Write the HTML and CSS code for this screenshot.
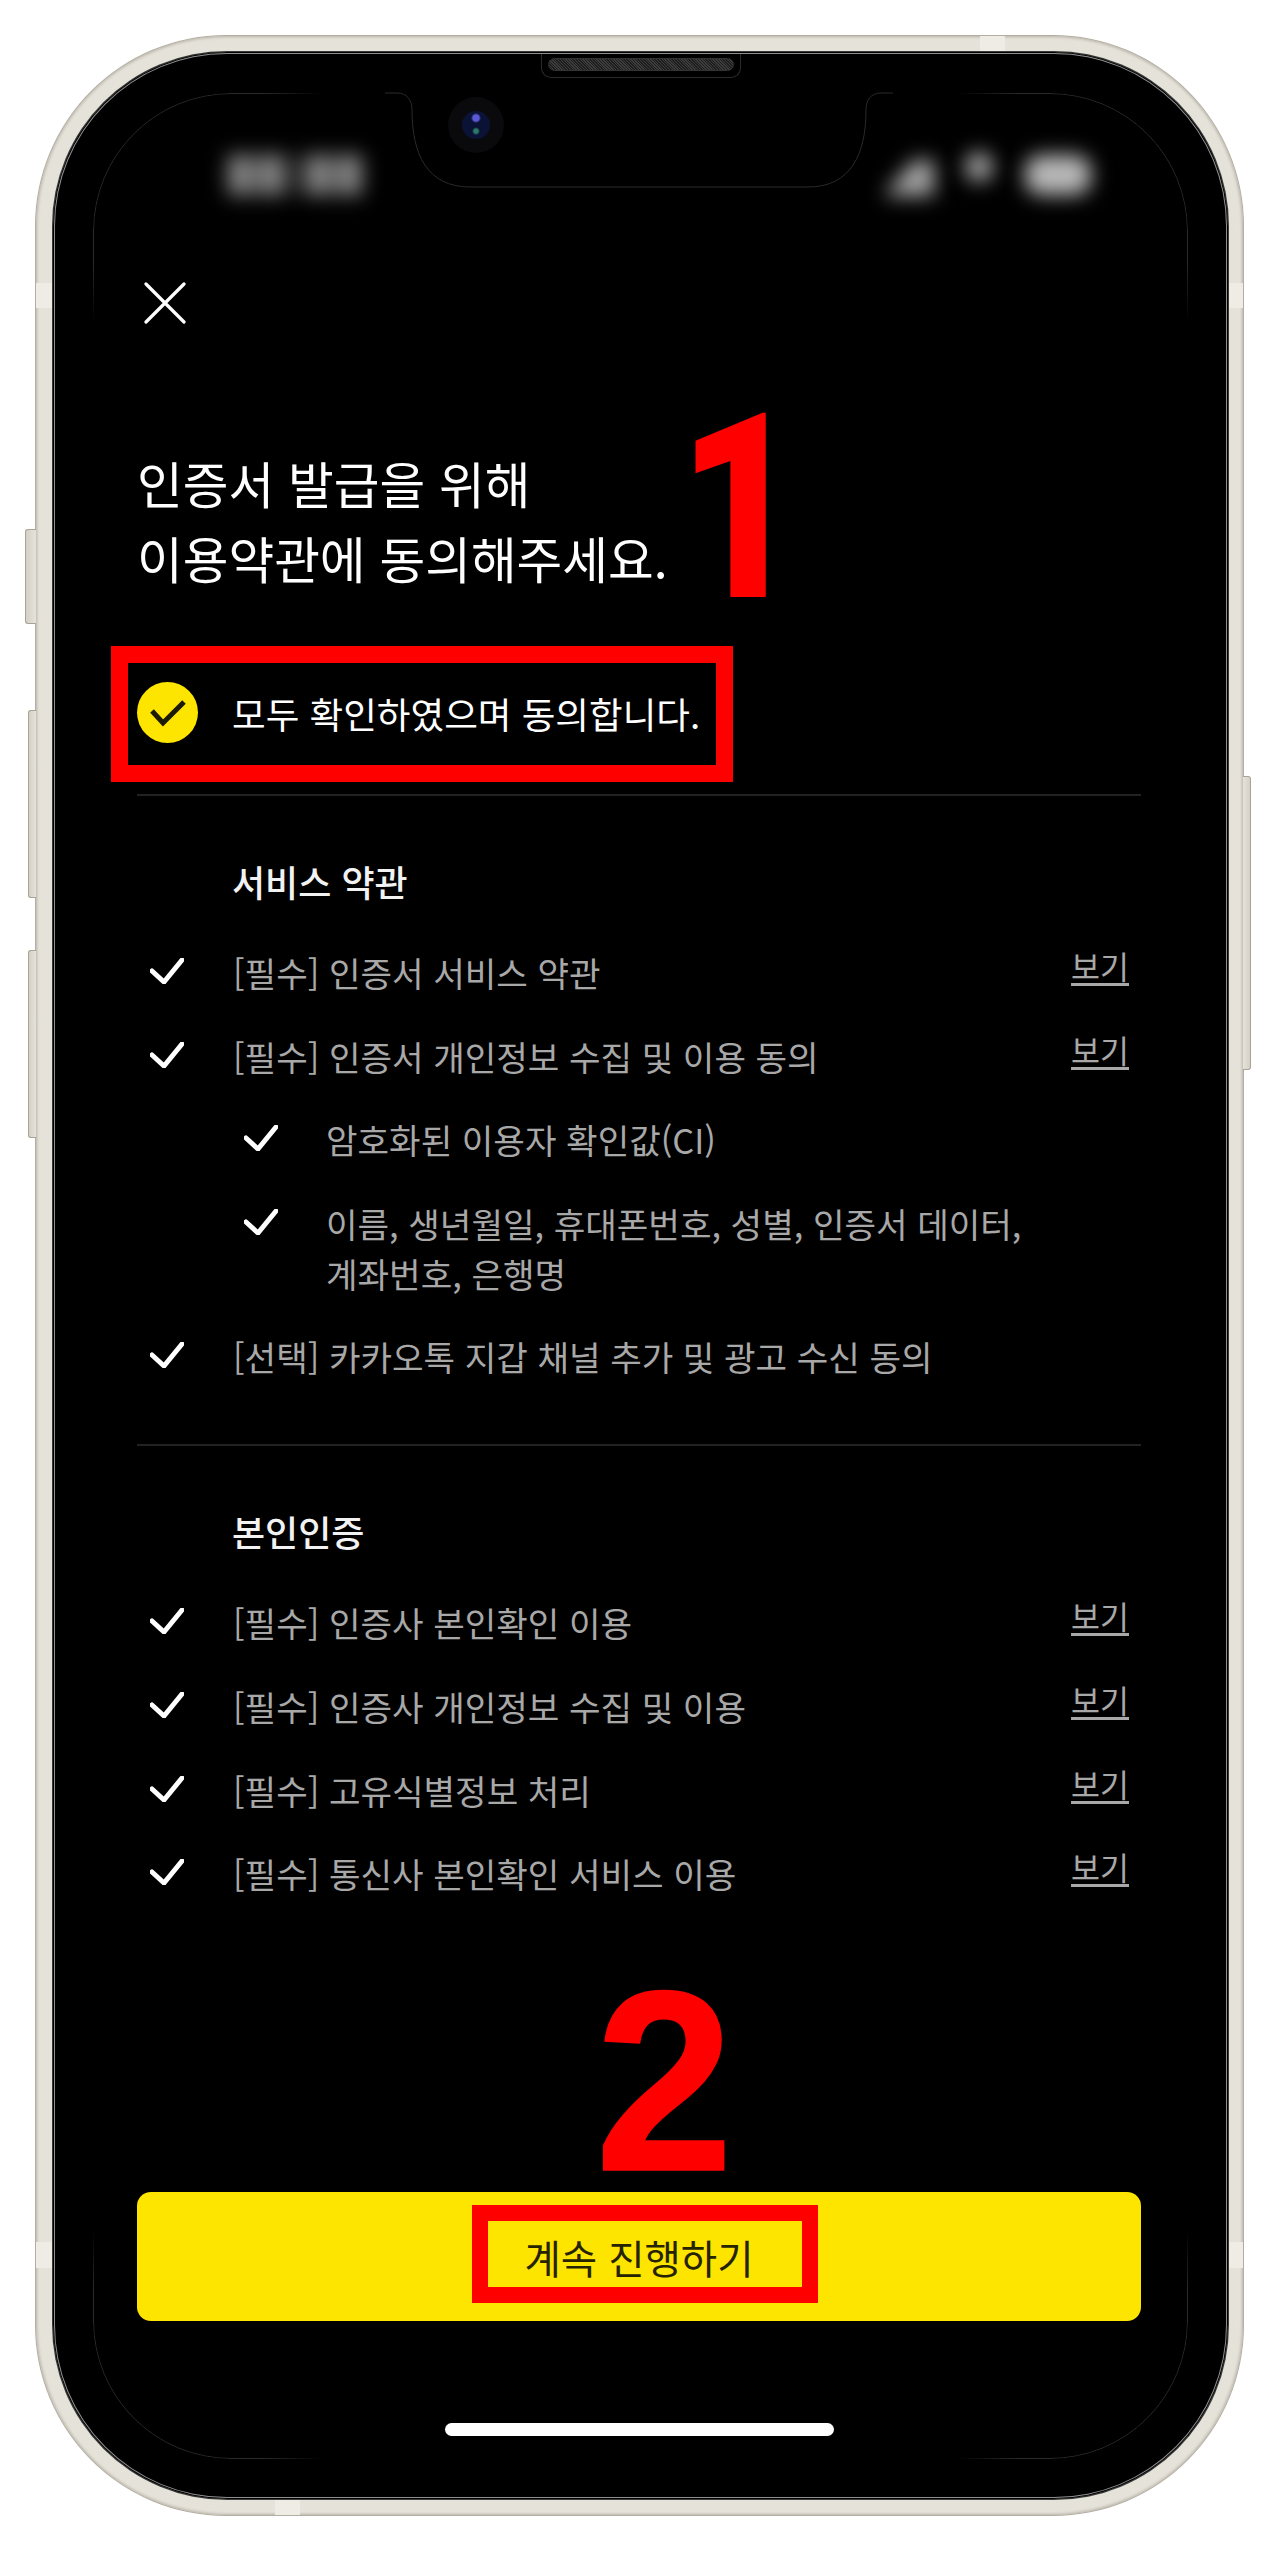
FILE: index.html
```html
<!DOCTYPE html>
<html lang="ko">
<head>
<meta charset="utf-8">
<title>인증서 발급</title>
<link rel="stylesheet" href="styles.css">
</head>
<body>
<div class="phone">
  <i class="side mute"></i><i class="side volup"></i><i class="side voldown"></i><i class="side power"></i>
  <i class="band band-lt"></i><i class="band band-rt"></i><i class="band band-lb"></i><i class="band band-rb"></i><i class="band band-top"></i><i class="band band-bottom"></i>
  <div class="screen">
    <div class="glass"></div>
    <svg class="notch" viewBox="0 0 508 100" width="508" height="100"><path d="M0 1H12C22 1 27 8 27 18 27 62 42 95 85 95H423C466 95 481 62 481 18 481 8 486 1 496 1H508" /></svg>
    <div class="speaker"><span></span></div>
    <div class="camera"><span></span></div>
    <div class="blob blob-time"><i></i><i></i><b></b><i></i><i></i></div>
    <div class="blob blob-signal"></div>
    <div class="blob blob-wifi"></div>
    <div class="blob blob-battery"></div>

    <main class="content">
      <button class="close" aria-label="닫기">
        <svg viewBox="0 0 42 42" width="42" height="42"><path d="M2 2 40 40M40 2 2 40" fill="none" stroke="#fff" stroke-width="3.2" stroke-linecap="round"/></svg>
      </button>
      <h1 class="title">인증서 발급을 위해<br>이용약관에 동의해주세요.</h1>
      <div class="agree">
        <span class="tick-round">
          <svg viewBox="0 0 61 61" width="61" height="61"><path d="M15 29 26 41 47 20" fill="none" stroke="#1c1a00" stroke-width="5"/></svg>
        </span>
        <span class="agree-text">모두 확인하였으며 동의합니다.</span>
      </div>

      <section class="group first">
        <h2 class="group-title">서비스 약관</h2>
        <ul class="rows">
          <li class="row"><svg class="chk" viewBox="0 0 34 26"><path d="M2 13 14 24 32 2" /></svg><span class="label">[필수] 인증서 서비스 약관</span><a class="see">보기</a></li>
          <li class="row"><svg class="chk" viewBox="0 0 34 26"><path d="M2 13 14 24 32 2" /></svg><span class="label">[필수] 인증서 개인정보 수집 및 이용 동의</span><a class="see">보기</a></li>
          <li class="row sub"><svg class="chk" viewBox="0 0 34 26"><path d="M2 13 14 24 32 2" /></svg><span class="label">암호화된 이용자 확인값(CI)</span></li>
          <li class="row sub"><svg class="chk" viewBox="0 0 34 26"><path d="M2 13 14 24 32 2" /></svg><span class="label">이름, 생년월일, 휴대폰번호, 성별, 인증서 데이터,<br>계좌번호, 은행명</span></li>
          <li class="row"><svg class="chk" viewBox="0 0 34 26"><path d="M2 13 14 24 32 2" /></svg><span class="label">[선택] 카카오톡 지갑 채널 추가 및 광고 수신 동의</span></li>
        </ul>
      </section>

      <section class="group second">
        <h2 class="group-title">본인인증</h2>
        <ul class="rows">
          <li class="row"><svg class="chk" viewBox="0 0 34 26"><path d="M2 13 14 24 32 2" /></svg><span class="label">[필수] 인증사 본인확인 이용</span><a class="see">보기</a></li>
          <li class="row"><svg class="chk" viewBox="0 0 34 26"><path d="M2 13 14 24 32 2" /></svg><span class="label">[필수] 인증사 개인정보 수집 및 이용</span><a class="see">보기</a></li>
          <li class="row"><svg class="chk" viewBox="0 0 34 26"><path d="M2 13 14 24 32 2" /></svg><span class="label">[필수] 고유식별정보 처리</span><a class="see">보기</a></li>
          <li class="row"><svg class="chk" viewBox="0 0 34 26"><path d="M2 13 14 24 32 2" /></svg><span class="label">[필수] 통신사 본인확인 서비스 이용</span><a class="see">보기</a></li>
        </ul>
      </section>

      <button class="cta">계속 진행하기</button>
      <div class="home"></div>
    </main>

    <div class="mark mark-box-1"></div>
    <div class="mark mark-box-2"></div>
    <div class="num num-1">1</div>
    <div class="num num-2">2</div>
  </div>
</div>
</body>
</html>
```
FILE: styles.css
```css
* { box-sizing: border-box; }
html, body { margin: 0; padding: 0; background: #fff; }
body { width: 1280px; height: 2552px; overflow: hidden; font-family: "Noto Sans CJK KR", "Noto Sans", sans-serif; }

.phone {
  position: relative;
  width: 1207px;
  height: 2479px;
  margin: 36px 0 0 36px;
  padding: 16px 15px 16px 17px;
  border-radius: 190px;
  background: #e5e2da;
  box-shadow: 0 0 0 1px #b3aea2, inset 0 0 3px 1px #b9b4a8;
}
.side {
  position: absolute;
  display: block;
  background: linear-gradient(90deg, #d4d0c5, #e6e3db);
  border: 1px solid #a8a396;
  border-radius: 3px 0 0 3px;
  border-right: 0;
}
.mute { left: -11px; top: 493px; width: 11px; height: 95px; }
.volup { left: -8px; top: 674px; width: 8px; height: 188px; }
.voldown { left: -8px; top: 914px; width: 8px; height: 188px; }
.power { left: 1207px; top: 740px; width: 8px; height: 294px; border-radius: 0 3px 3px 0; border: 1px solid #a8a396; border-left: 0; background: linear-gradient(90deg, #e6e3db, #d4d0c5); }

.band { position: absolute; display: block; background: #efece6; }
.band-lt, .band-rt { top: 247px; width: 17px; height: 25px; }
.band-lb, .band-rb { top: 2206px; width: 17px; height: 26px; }
.band-lt, .band-lb { left: 0; }
.band-rt, .band-rb { right: 0; }
.band-top { top: 0; left: 944px; width: 25px; height: 16px; }
.band-bottom { bottom: 0; left: 239px; width: 25px; height: 16px; }

.screen {
  position: relative;
  width: 1175px;
  height: 2447px;
  border-radius: 174px;
  background: #000;
  box-shadow: 0 0 0 1px #3a3a38;
  overflow: hidden;
  color: #fff;
}
.screen::after {
  content: "";
  position: absolute;
  inset: 0;
  border-radius: 174px;
  box-shadow: inset 0 0 0 1px #000, inset 0 0 0 2px #8f8f8f;
  pointer-events: none;
}
.glass {
  position: absolute;
  left: 40px; top: 41px; right: 40px; bottom: 40px;
  border: 1px solid #2a2a2a;
  border-radius: 138px;
  -webkit-mask-image:
    radial-gradient(circle at 0 0, #000 170px, transparent 230px),
    radial-gradient(circle at 100% 0, #000 170px, transparent 230px),
    radial-gradient(circle at 0 100%, #000 170px, transparent 230px),
    radial-gradient(circle at 100% 100%, #000 170px, transparent 230px);
  mask-image:
    radial-gradient(circle at 0 0, #000 170px, transparent 230px),
    radial-gradient(circle at 100% 0, #000 170px, transparent 230px),
    radial-gradient(circle at 0 100%, #000 170px, transparent 230px),
    radial-gradient(circle at 100% 100%, #000 170px, transparent 230px);
}
.notch {
  position: absolute;
  left: 332px; top: 40px;
  fill: none;
  stroke: #2a2a2a;
  stroke-width: 1;
}
.speaker {
  position: absolute;
  left: 488px; top: 0;
  width: 200px; height: 26px;
  border: 1px solid #2a2a2a;
  border-top: 0;
  border-radius: 0 0 10px 10px;
  padding: 6px 6px 0;
}
.speaker span {
  display: block;
  height: 13px;
  border-radius: 7px;
  background: repeating-linear-gradient(45deg, #1e1e1e 0 1px, #3c3c3c 1px 2px);
  border: 1px solid #333;
}
.camera {
  position: absolute;
  left: 395px; top: 45px;
  width: 56px; height: 56px;
  padding: 14px;
  border-radius: 50%;
  background: #0a0a0c;
}
.camera span {
  display: block;
  width: 28px; height: 28px;
  border-radius: 50%;
  background: radial-gradient(circle at 50% 25%, #5a5ad8 0 3px, transparent 5px),
              radial-gradient(circle at 50% 72%, #2a7a66 0 2px, transparent 4px),
              #0a1236;
}

.blob { position: absolute; filter: blur(10px); }
.blob-time { left: 175px; top: 103px; display: flex; gap: 4px; height: 40px; }
.blob-time i { display: block; width: 26px; height: 40px; background: #858585; }
.blob-time b { display: block; width: 14px; height: 40px; background: #2a2a2a; }
.blob-signal { left: 827px; top: 108px; width: 54px; height: 36px; background: linear-gradient(130deg, transparent 40%, #a5a5a5 40%); }
.blob-wifi { left: 912px; top: 100px; width: 28px; height: 30px; border-radius: 50%; background: #a5a5a5; }
.blob-battery { left: 972px; top: 103px; width: 66px; height: 40px; border-radius: 16px; background: #b8b8b8; }

.content {
  position: relative;
  display: flex;
  flex-direction: column;
  height: 100%;
  padding: 230px 87px 0 84px;
}
.close {
  display: block;
  width: 42px; height: 42px;
  margin: 0 0 0 7px;
  padding: 0;
  background: none;
  border: 0;
}
.close svg { display: block; }
.title {
  margin: 121px 0 0 0;
  font-size: 49.7px;
  font-weight: 400;
  line-height: 75px;
  color: #fff;
}
.agree {
  display: flex;
  align-items: center;
  height: 61px;
  margin-top: 87px;
}
.tick-round { display: block; width: 61px; height: 61px; border-radius: 50%; background: #fee500; flex: none; }
.tick-round svg { display: block; }
.agree-text { margin: 2px 0 0 34px; font-size: 36.6px; line-height: 50px; color: #fff; }

.group { border-top: 2px solid #222; padding-top: 60px; }
.group.first { margin-top: 51px; }
.group.second { margin-top: 63px; }
.group-title {
  margin: 0 0 0 95px;
  font-size: 36px;
  font-weight: 500;
  line-height: 50px;
  color: #f2f2f2;
}
.rows { list-style: none; margin: 41px 0 0; padding: 0; display: flex; flex-direction: column; gap: 33.6px; }
.row { position: relative; display: flex; align-items: flex-start; padding-left: 96px; }
.row.sub { padding-left: 189px; }
.chk { position: absolute; left: 13px; top: 11px; width: 34px; height: 26px; fill: none; stroke: #fff; stroke-width: 5; stroke-linecap: round; stroke-linejoin: round; }
.row.sub .chk { left: 107px; }
.label { flex: 1; font-size: 34.3px; line-height: 50px; color: #a8a8a8; font-weight: 400; }
.see { margin: -7px 12px 0 0; font-size: 31.5px; line-height: 50px; color: #a8a8a8; text-decoration: underline; text-underline-offset: 4px; }

.cta {
  display: block;
  flex: none;
  width: 1004px;
  height: 129px;
  margin-top: auto;
  border: 0;
  border-radius: 14px;
  background: #fee500;
  color: #262400;
  font-family: inherit;
  font-size: 39.5px;
}
.home {
  flex: none;
  width: 389px;
  height: 13px;
  margin: 102px 0 63px 308px;
  border-radius: 7px;
  background: #fff;
}

.mark { position: absolute; border: 17px solid #f00; }
.mark-box-1 { left: 58px; top: 594px; width: 622px; height: 136px; }
.mark-box-2 { left: 419px; top: 2153px; width: 346px; height: 98px; border-width: 16px; }
.num {
  position: absolute;
  font-weight: 700;
  line-height: 190px;
  color: #f00;
}
.num-1 { left: 625px; top: 362px; font-family: Roboto, "Liberation Sans", sans-serif; font-weight: 900; font-size: 259px; transform: scaleX(.83); transform-origin: 0 0; }
.num-2 { left: 542px; top: 1934px; font-family: "Liberation Sans", Arial, sans-serif; font-size: 257px; transform: scaleX(.97); transform-origin: 0 0; -webkit-text-stroke: 1.5px #f00; }
```
